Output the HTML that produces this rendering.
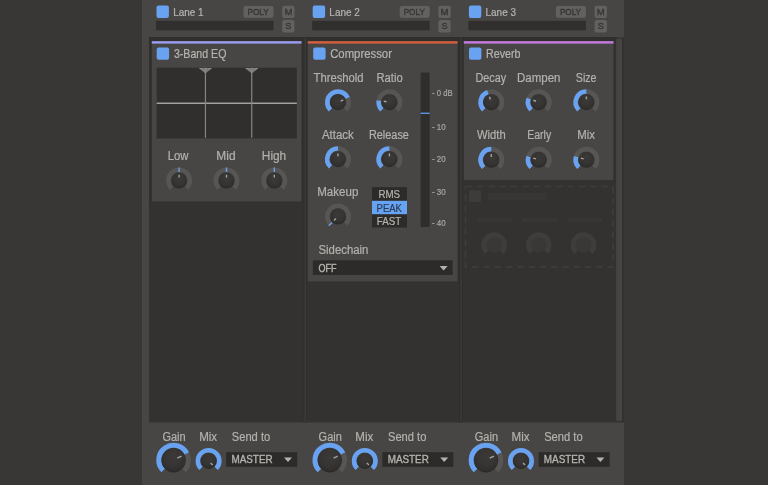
<!DOCTYPE html>
<html><head><meta charset="utf-8"><style>
html,body{margin:0;padding:0;background:#383735;width:768px;height:485px;overflow:hidden}
svg{display:block;filter:blur(0.6px)}
text{font-family:"Liberation Sans",sans-serif;stroke-width:0.22px;paint-order:stroke}
</style></head><body>
<svg width="768" height="485" viewBox="0 0 768 485">
<defs><linearGradient id="tg" x1="0" x2="1" y1="0" y2="0"><stop offset="0" stop-color="#959390"/><stop offset="0.4" stop-color="#7a7875"/><stop offset="0.5" stop-color="#8a8885"/><stop offset="0.6" stop-color="#7a7875"/><stop offset="1" stop-color="#959390"/></linearGradient><radialGradient id="kg" cx="50%" cy="38%" r="62%"><stop offset="0" stop-color="#3a3937"/><stop offset="0.55" stop-color="#363533"/><stop offset="0.85" stop-color="#302f2d"/><stop offset="1" stop-color="#292826"/></radialGradient></defs>
<rect x="0.00" y="0.00" width="768.00" height="485.00" rx="0" fill="#383735" />
<rect x="142.00" y="0.00" width="482.00" height="485.00" rx="0" fill="#474644" />
<rect x="149.00" y="37.50" width="475.00" height="385.00" rx="0" fill="#333230" />
<rect x="149.00" y="37.00" width="468.00" height="1.00" rx="0" fill="#302f2d" />
<rect x="616.20" y="38.70" width="5.80" height="382.30" rx="1" fill="#454442" />
<rect x="156.50" y="5.60" width="12.40" height="12.40" rx="2" fill="#69a2f0" />
<text x="173.15" y="15.80" font-size="11.13" fill="#b5b3af" stroke="#b5b3af" textLength="30.48" lengthAdjust="spacingAndGlyphs" >Lane 1</text>
<rect x="156.00" y="20.90" width="117.50" height="9.40" rx="0" fill="#302f2d" />
<rect x="243.50" y="6.00" width="30.00" height="11.80" rx="2" fill="#62615f" />
<text x="247.50" y="14.90" font-size="9.12" fill="#363533" stroke="#363533" textLength="21.15" lengthAdjust="spacingAndGlyphs" font-weight="normal" style="stroke-width:0.35px">POLY</text>
<rect x="282.20" y="5.80" width="12.30" height="12.10" rx="2" fill="#62615f" />
<rect x="282.20" y="20.10" width="12.30" height="12.30" rx="2" fill="#62615f" />
<text x="284.39" y="15.10" font-size="9.54" fill="#363533" stroke="#363533" textLength="7.96" lengthAdjust="spacingAndGlyphs" font-weight="normal" style="stroke-width:0.35px">M</text>
<text x="288.35" y="29.20" font-size="9.2" fill="#363533" stroke="#363533" text-anchor="middle" font-weight="normal" style="stroke-width:0.35px">S</text>
<text x="162.40" y="440.70" font-size="12.51" fill="#b3b1ad" stroke="#b3b1ad" textLength="23.19" lengthAdjust="spacingAndGlyphs" >Gain</text>
<text x="199.17" y="440.70" font-size="12.51" fill="#b3b1ad" stroke="#b3b1ad" textLength="17.99" lengthAdjust="spacingAndGlyphs" >Mix</text>
<text x="231.75" y="440.70" font-size="12.51" fill="#b3b1ad" stroke="#b3b1ad" textLength="38.47" lengthAdjust="spacingAndGlyphs" >Send to</text>
<path d="M163.28 470.42 A14.600000000000001 14.600000000000001 0 1 1 183.92 470.42" fill="none" stroke="#575654" stroke-width="5.4"/>
<path d="M163.28 470.42 A14.600000000000001 14.600000000000001 0 1 1 186.66 453.57" fill="none" stroke="#69a2f0" stroke-width="5.4"/>
<circle cx="173.60" cy="460.10" r="12.30" fill="url(#kg)"/>
<line x1="177.34" y1="458.23" x2="181.52" y2="456.14" stroke="#a4a29e" stroke-width="1.4"/>
<path d="M201.03 468.47 A10.7 10.7 0 1 1 216.17 468.47" fill="none" stroke="#575654" stroke-width="4.6"/>
<path d="M201.03 468.47 A10.7 10.7 0 1 1 216.17 468.47" fill="none" stroke="#69a2f0" stroke-width="4.6"/>
<circle cx="208.60" cy="460.90" r="8.00" fill="url(#kg)"/>
<line x1="210.64" y1="462.94" x2="212.67" y2="464.97" stroke="#a4a29e" stroke-width="1.4"/>
<rect x="226.20" y="452.20" width="71.00" height="14.60" rx="0" fill="#2c2b29" />
<text x="231.46" y="463.40" font-size="10.6" fill="#b5b3af" stroke="#b5b3af" textLength="41.16" lengthAdjust="spacingAndGlyphs" style="stroke-width:0.35px">MASTER</text>
<path d="M284.00 457.4 L292.00 457.4 L288.00 462 Z" fill="#b5b3af"/>
<rect x="312.70" y="5.60" width="12.40" height="12.40" rx="2" fill="#69a2f0" />
<text x="329.35" y="15.80" font-size="11.13" fill="#b5b3af" stroke="#b5b3af" textLength="30.48" lengthAdjust="spacingAndGlyphs" >Lane 2</text>
<rect x="312.20" y="20.90" width="117.50" height="9.40" rx="0" fill="#302f2d" />
<rect x="399.70" y="6.00" width="30.00" height="11.80" rx="2" fill="#62615f" />
<text x="403.70" y="14.90" font-size="9.12" fill="#363533" stroke="#363533" textLength="21.15" lengthAdjust="spacingAndGlyphs" font-weight="normal" style="stroke-width:0.35px">POLY</text>
<rect x="438.40" y="5.80" width="12.30" height="12.10" rx="2" fill="#62615f" />
<rect x="438.40" y="20.10" width="12.30" height="12.30" rx="2" fill="#62615f" />
<text x="440.59" y="15.10" font-size="9.54" fill="#363533" stroke="#363533" textLength="7.96" lengthAdjust="spacingAndGlyphs" font-weight="normal" style="stroke-width:0.35px">M</text>
<text x="444.55" y="29.20" font-size="9.2" fill="#363533" stroke="#363533" text-anchor="middle" font-weight="normal" style="stroke-width:0.35px">S</text>
<text x="318.60" y="440.70" font-size="12.51" fill="#b3b1ad" stroke="#b3b1ad" textLength="23.19" lengthAdjust="spacingAndGlyphs" >Gain</text>
<text x="355.37" y="440.70" font-size="12.51" fill="#b3b1ad" stroke="#b3b1ad" textLength="17.99" lengthAdjust="spacingAndGlyphs" >Mix</text>
<text x="387.95" y="440.70" font-size="12.51" fill="#b3b1ad" stroke="#b3b1ad" textLength="38.47" lengthAdjust="spacingAndGlyphs" >Send to</text>
<path d="M319.48 470.42 A14.600000000000001 14.600000000000001 0 1 1 340.12 470.42" fill="none" stroke="#575654" stroke-width="5.4"/>
<path d="M319.48 470.42 A14.600000000000001 14.600000000000001 0 1 1 342.86 453.57" fill="none" stroke="#69a2f0" stroke-width="5.4"/>
<circle cx="329.80" cy="460.10" r="12.30" fill="url(#kg)"/>
<line x1="333.54" y1="458.23" x2="337.72" y2="456.14" stroke="#a4a29e" stroke-width="1.4"/>
<path d="M357.23 468.47 A10.7 10.7 0 1 1 372.37 468.47" fill="none" stroke="#575654" stroke-width="4.6"/>
<path d="M357.23 468.47 A10.7 10.7 0 1 1 372.37 468.47" fill="none" stroke="#69a2f0" stroke-width="4.6"/>
<circle cx="364.80" cy="460.90" r="8.00" fill="url(#kg)"/>
<line x1="366.84" y1="462.94" x2="368.87" y2="464.97" stroke="#a4a29e" stroke-width="1.4"/>
<rect x="382.40" y="452.20" width="71.00" height="14.60" rx="0" fill="#2c2b29" />
<text x="387.66" y="463.40" font-size="10.6" fill="#b5b3af" stroke="#b5b3af" textLength="41.16" lengthAdjust="spacingAndGlyphs" style="stroke-width:0.35px">MASTER</text>
<path d="M440.20 457.4 L448.20 457.4 L444.20 462 Z" fill="#b5b3af"/>
<rect x="468.90" y="5.60" width="12.40" height="12.40" rx="2" fill="#69a2f0" />
<text x="485.55" y="15.80" font-size="11.13" fill="#b5b3af" stroke="#b5b3af" textLength="30.43" lengthAdjust="spacingAndGlyphs" >Lane 3</text>
<rect x="468.40" y="20.90" width="117.50" height="9.40" rx="0" fill="#302f2d" />
<rect x="555.90" y="6.00" width="30.00" height="11.80" rx="2" fill="#62615f" />
<text x="559.90" y="14.90" font-size="9.12" fill="#363533" stroke="#363533" textLength="21.15" lengthAdjust="spacingAndGlyphs" font-weight="normal" style="stroke-width:0.35px">POLY</text>
<rect x="594.60" y="5.80" width="12.30" height="12.10" rx="2" fill="#62615f" />
<rect x="594.60" y="20.10" width="12.30" height="12.30" rx="2" fill="#62615f" />
<text x="596.79" y="15.10" font-size="9.54" fill="#363533" stroke="#363533" textLength="7.96" lengthAdjust="spacingAndGlyphs" font-weight="normal" style="stroke-width:0.35px">M</text>
<text x="600.75" y="29.20" font-size="9.2" fill="#363533" stroke="#363533" text-anchor="middle" font-weight="normal" style="stroke-width:0.35px">S</text>
<text x="474.80" y="440.70" font-size="12.51" fill="#b3b1ad" stroke="#b3b1ad" textLength="23.19" lengthAdjust="spacingAndGlyphs" >Gain</text>
<text x="511.57" y="440.70" font-size="12.51" fill="#b3b1ad" stroke="#b3b1ad" textLength="17.99" lengthAdjust="spacingAndGlyphs" >Mix</text>
<text x="544.15" y="440.70" font-size="12.51" fill="#b3b1ad" stroke="#b3b1ad" textLength="38.47" lengthAdjust="spacingAndGlyphs" >Send to</text>
<path d="M475.68 470.42 A14.600000000000001 14.600000000000001 0 1 1 496.32 470.42" fill="none" stroke="#575654" stroke-width="5.4"/>
<path d="M475.68 470.42 A14.600000000000001 14.600000000000001 0 1 1 499.06 453.57" fill="none" stroke="#69a2f0" stroke-width="5.4"/>
<circle cx="486.00" cy="460.10" r="12.30" fill="url(#kg)"/>
<line x1="489.74" y1="458.23" x2="493.92" y2="456.14" stroke="#a4a29e" stroke-width="1.4"/>
<path d="M513.43 468.47 A10.7 10.7 0 1 1 528.57 468.47" fill="none" stroke="#575654" stroke-width="4.6"/>
<path d="M513.43 468.47 A10.7 10.7 0 1 1 528.57 468.47" fill="none" stroke="#69a2f0" stroke-width="4.6"/>
<circle cx="521.00" cy="460.90" r="8.00" fill="url(#kg)"/>
<line x1="523.04" y1="462.94" x2="525.07" y2="464.97" stroke="#a4a29e" stroke-width="1.4"/>
<rect x="538.60" y="452.20" width="71.00" height="14.60" rx="0" fill="#2c2b29" />
<text x="543.86" y="463.40" font-size="10.6" fill="#b5b3af" stroke="#b5b3af" textLength="41.16" lengthAdjust="spacingAndGlyphs" style="stroke-width:0.35px">MASTER</text>
<path d="M596.40 457.4 L604.40 457.4 L600.40 462 Z" fill="#b5b3af"/>
<rect x="149.00" y="37.50" width="154.00" height="164.80" rx="0" fill="#302f2d" />
<rect x="151.80" y="41.00" width="149.70" height="160.50" rx="0" fill="#474644" />
<rect x="151.80" y="41.20" width="149.70" height="2.40" rx="0" fill="#9b9cf2" />
<rect x="156.70" y="47.40" width="12.40" height="12.40" rx="2" fill="#69a2f0" />
<text x="173.93" y="57.80" font-size="11.98" fill="#b5b3af" stroke="#b5b3af" textLength="52.48" lengthAdjust="spacingAndGlyphs" >3-Band EQ</text>
<rect x="156.70" y="67.70" width="140.10" height="70.80" rx="0" fill="#302f2d" />
<rect x="156.70" y="102.55" width="140.10" height="1.40" rx="0" fill="#aaa8a4" />
<rect x="204.85" y="67.70" width="1.20" height="70.10" rx="0" fill="#878582" />
<path d="M198.75 68.1 L212.15 68.1 L205.45 73.6 Z" fill="url(#tg)"/>
<rect x="251.15" y="67.70" width="1.20" height="70.10" rx="0" fill="#878582" />
<path d="M245.05 68.1 L258.45 68.1 L251.75 73.6 Z" fill="url(#tg)"/>
<text x="167.64" y="160.00" font-size="12.51" fill="#b3b1ad" stroke="#b3b1ad" textLength="20.80" lengthAdjust="spacingAndGlyphs" >Low</text>
<path d="M171.53 188.07 A10.7 10.7 0 1 1 186.67 188.07" fill="none" stroke="#575654" stroke-width="4.6"/>
<line x1="179.10" y1="172.10" x2="179.10" y2="167.50" stroke="#69a2f0" stroke-width="1.35"/>
<circle cx="179.10" cy="180.50" r="8.00" fill="url(#kg)"/>
<line x1="179.10" y1="177.62" x2="179.10" y2="174.74" stroke="#a4a29e" stroke-width="1.4"/>
<text x="216.29" y="160.00" font-size="12.51" fill="#b3b1ad" stroke="#b3b1ad" textLength="19.25" lengthAdjust="spacingAndGlyphs" >Mid</text>
<path d="M218.93 188.07 A10.7 10.7 0 1 1 234.07 188.07" fill="none" stroke="#575654" stroke-width="4.6"/>
<line x1="226.50" y1="172.10" x2="226.50" y2="167.50" stroke="#69a2f0" stroke-width="1.35"/>
<circle cx="226.50" cy="180.50" r="8.00" fill="url(#kg)"/>
<line x1="226.50" y1="177.62" x2="226.50" y2="174.74" stroke="#a4a29e" stroke-width="1.4"/>
<text x="261.80" y="160.00" font-size="12.51" fill="#b3b1ad" stroke="#b3b1ad" textLength="24.44" lengthAdjust="spacingAndGlyphs" >High</text>
<path d="M266.73 188.07 A10.7 10.7 0 1 1 281.87 188.07" fill="none" stroke="#575654" stroke-width="4.6"/>
<line x1="274.30" y1="172.10" x2="274.30" y2="167.50" stroke="#69a2f0" stroke-width="1.35"/>
<circle cx="274.30" cy="180.50" r="8.00" fill="url(#kg)"/>
<line x1="274.30" y1="177.62" x2="274.30" y2="174.74" stroke="#a4a29e" stroke-width="1.4"/>
<rect x="305.00" y="37.50" width="154.00" height="244.90" rx="0" fill="#302f2d" />
<rect x="307.80" y="41.00" width="149.70" height="240.60" rx="0" fill="#474644" />
<rect x="307.80" y="41.20" width="149.70" height="2.40" rx="0" fill="#d45f3c" />
<rect x="313.20" y="47.40" width="12.40" height="12.40" rx="2" fill="#69a2f0" />
<text x="330.18" y="57.80" font-size="11.98" fill="#b5b3af" stroke="#b5b3af" textLength="61.75" lengthAdjust="spacingAndGlyphs" >Compressor</text>
<text x="313.57" y="81.50" font-size="12.51" fill="#b3b1ad" stroke="#b3b1ad" textLength="50.03" lengthAdjust="spacingAndGlyphs" >Threshold</text>
<path d="M330.43 109.77 A10.7 10.7 0 1 1 345.57 109.77" fill="none" stroke="#575654" stroke-width="4.6"/>
<path d="M330.43 109.77 A10.7 10.7 0 1 1 347.79 97.87" fill="none" stroke="#69a2f0" stroke-width="4.6"/>
<circle cx="338.00" cy="102.20" r="8.00" fill="url(#kg)"/>
<line x1="340.63" y1="101.04" x2="343.27" y2="99.87" stroke="#a4a29e" stroke-width="1.4"/>
<text x="376.45" y="81.50" font-size="12.51" fill="#b3b1ad" stroke="#b3b1ad" textLength="26.24" lengthAdjust="spacingAndGlyphs" >Ratio</text>
<path d="M381.83 109.77 A10.7 10.7 0 1 1 396.97 109.77" fill="none" stroke="#575654" stroke-width="4.6"/>
<path d="M381.83 109.77 A10.7 10.7 0 0 1 378.83 100.53" fill="none" stroke="#69a2f0" stroke-width="4.6"/>
<circle cx="389.40" cy="102.20" r="8.00" fill="url(#kg)"/>
<line x1="386.56" y1="101.75" x2="383.71" y2="101.30" stroke="#a4a29e" stroke-width="1.4"/>
<text x="321.89" y="138.70" font-size="12.51" fill="#b3b1ad" stroke="#b3b1ad" textLength="31.84" lengthAdjust="spacingAndGlyphs" >Attack</text>
<path d="M330.43 166.77 A10.7 10.7 0 1 1 345.57 166.77" fill="none" stroke="#575654" stroke-width="4.6"/>
<path d="M330.43 166.77 A10.7 10.7 0 0 1 338.00 148.50" fill="none" stroke="#69a2f0" stroke-width="4.6"/>
<circle cx="338.00" cy="159.20" r="8.00" fill="url(#kg)"/>
<line x1="338.00" y1="156.32" x2="338.00" y2="153.44" stroke="#a4a29e" stroke-width="1.4"/>
<text x="368.98" y="138.70" font-size="12.51" fill="#b3b1ad" stroke="#b3b1ad" textLength="39.90" lengthAdjust="spacingAndGlyphs" >Release</text>
<path d="M381.83 166.77 A10.7 10.7 0 1 1 396.97 166.77" fill="none" stroke="#575654" stroke-width="4.6"/>
<path d="M381.83 166.77 A10.7 10.7 0 0 1 389.40 148.50" fill="none" stroke="#69a2f0" stroke-width="4.6"/>
<circle cx="389.40" cy="159.20" r="8.00" fill="url(#kg)"/>
<line x1="389.40" y1="156.32" x2="389.40" y2="153.44" stroke="#a4a29e" stroke-width="1.4"/>
<text x="317.23" y="196.00" font-size="12.51" fill="#b3b1ad" stroke="#b3b1ad" textLength="41.12" lengthAdjust="spacingAndGlyphs" >Makeup</text>
<path d="M330.43 224.07 A10.7 10.7 0 1 1 345.57 224.07" fill="none" stroke="#575654" stroke-width="4.6"/>
<line x1="332.06" y1="222.44" x2="328.81" y2="225.69" stroke="#69a2f0" stroke-width="1.35"/>
<circle cx="338.00" cy="216.50" r="8.00" fill="url(#kg)"/>
<line x1="335.96" y1="218.54" x2="333.93" y2="220.57" stroke="#a4a29e" stroke-width="1.4"/>
<rect x="372.00" y="187.20" width="35.00" height="40.30" rx="0" fill="#2c2b29" />
<rect x="372.00" y="200.80" width="35.00" height="13.40" rx="0" fill="#66a3f3" />
<text x="378.47" y="198.10" font-size="11.02" fill="#b5b3af" stroke="#b5b3af" textLength="21.64" lengthAdjust="spacingAndGlyphs" >RMS</text>
<text x="376.59" y="211.50" font-size="11.02" fill="#2c3a50" stroke="#2c3a50" textLength="25.28" lengthAdjust="spacingAndGlyphs" >PEAK</text>
<text x="376.87" y="225.00" font-size="11.02" fill="#b5b3af" stroke="#b5b3af" textLength="24.49" lengthAdjust="spacingAndGlyphs" >FAST</text>
<rect x="420.70" y="72.50" width="8.90" height="154.50" rx="0" fill="#2f2e2c" />
<rect x="420.70" y="112.60" width="8.90" height="1.40" rx="0" fill="#5b96e6" />
<text x="432.00" y="96.20" font-size="9.96" fill="#a9a7a3" stroke="#a9a7a3" textLength="20.56" lengthAdjust="spacingAndGlyphs" >- 0 dB</text>
<text x="431.99" y="129.50" font-size="9.96" fill="#a9a7a3" stroke="#a9a7a3" textLength="13.70" lengthAdjust="spacingAndGlyphs" >- 10</text>
<text x="431.99" y="162.40" font-size="9.96" fill="#a9a7a3" stroke="#a9a7a3" textLength="13.70" lengthAdjust="spacingAndGlyphs" >- 20</text>
<text x="431.99" y="194.80" font-size="9.96" fill="#a9a7a3" stroke="#a9a7a3" textLength="13.70" lengthAdjust="spacingAndGlyphs" >- 30</text>
<text x="431.99" y="226.00" font-size="9.96" fill="#a9a7a3" stroke="#a9a7a3" textLength="13.70" lengthAdjust="spacingAndGlyphs" >- 40</text>
<text x="318.44" y="254.20" font-size="12.51" fill="#b3b1ad" stroke="#b3b1ad" textLength="49.98" lengthAdjust="spacingAndGlyphs" >Sidechain</text>
<rect x="312.90" y="260.30" width="139.70" height="14.60" rx="0" fill="#2c2b29" />
<text x="318.54" y="271.60" font-size="10.39" fill="#b5b3af" stroke="#b5b3af" textLength="18.06" lengthAdjust="spacingAndGlyphs" style="stroke-width:0.4px">OFF</text>
<path d="M439.6 266 L447.6 266 L443.6 270.5 Z" fill="#b5b3af"/>
<rect x="461.00" y="37.50" width="154.00" height="143.50" rx="0" fill="#302f2d" />
<rect x="463.80" y="41.00" width="149.70" height="139.20" rx="0" fill="#474644" />
<rect x="463.80" y="41.20" width="149.70" height="2.40" rx="0" fill="#c77ae0" />
<rect x="469.00" y="47.40" width="12.40" height="12.40" rx="2" fill="#69a2f0" />
<text x="486.09" y="57.80" font-size="11.98" fill="#b5b3af" stroke="#b5b3af" textLength="34.47" lengthAdjust="spacingAndGlyphs" >Reverb</text>
<text x="475.59" y="81.50" font-size="12.51" fill="#b3b1ad" stroke="#b3b1ad" textLength="30.51" lengthAdjust="spacingAndGlyphs" >Decay</text>
<path d="M483.73 109.77 A10.7 10.7 0 1 1 498.87 109.77" fill="none" stroke="#575654" stroke-width="4.6"/>
<path d="M483.73 109.77 A10.7 10.7 0 0 1 487.83 92.08" fill="none" stroke="#69a2f0" stroke-width="4.6"/>
<circle cx="491.30" cy="102.20" r="8.00" fill="url(#kg)"/>
<line x1="490.37" y1="99.48" x2="489.43" y2="96.75" stroke="#a4a29e" stroke-width="1.4"/>
<text x="517.03" y="81.50" font-size="12.51" fill="#b3b1ad" stroke="#b3b1ad" textLength="43.47" lengthAdjust="spacingAndGlyphs" >Dampen</text>
<path d="M531.13 109.77 A10.7 10.7 0 1 1 546.27 109.77" fill="none" stroke="#575654" stroke-width="4.6"/>
<path d="M531.13 109.77 A10.7 10.7 0 0 1 528.63 98.58" fill="none" stroke="#69a2f0" stroke-width="4.6"/>
<circle cx="538.70" cy="102.20" r="8.00" fill="url(#kg)"/>
<line x1="535.99" y1="101.22" x2="533.28" y2="100.25" stroke="#a4a29e" stroke-width="1.4"/>
<text x="575.77" y="81.50" font-size="12.51" fill="#b3b1ad" stroke="#b3b1ad" textLength="20.76" lengthAdjust="spacingAndGlyphs" >Size</text>
<path d="M578.83 109.77 A10.7 10.7 0 1 1 593.97 109.77" fill="none" stroke="#575654" stroke-width="4.6"/>
<path d="M578.83 109.77 A10.7 10.7 0 0 1 586.40 91.50" fill="none" stroke="#69a2f0" stroke-width="4.6"/>
<circle cx="586.40" cy="102.20" r="8.00" fill="url(#kg)"/>
<line x1="586.40" y1="99.32" x2="586.40" y2="96.44" stroke="#a4a29e" stroke-width="1.4"/>
<text x="476.99" y="138.80" font-size="12.51" fill="#b3b1ad" stroke="#b3b1ad" textLength="28.70" lengthAdjust="spacingAndGlyphs" >Width</text>
<path d="M483.73 167.37 A10.7 10.7 0 1 1 498.87 167.37" fill="none" stroke="#575654" stroke-width="4.6"/>
<path d="M483.73 167.37 A10.7 10.7 0 0 1 491.30 149.10" fill="none" stroke="#69a2f0" stroke-width="4.6"/>
<circle cx="491.30" cy="159.80" r="8.00" fill="url(#kg)"/>
<line x1="491.30" y1="156.92" x2="491.30" y2="154.04" stroke="#a4a29e" stroke-width="1.4"/>
<text x="527.31" y="138.80" font-size="12.51" fill="#b3b1ad" stroke="#b3b1ad" textLength="23.87" lengthAdjust="spacingAndGlyphs" >Early</text>
<path d="M531.13 167.37 A10.7 10.7 0 1 1 546.27 167.37" fill="none" stroke="#575654" stroke-width="4.6"/>
<path d="M531.13 167.37 A10.7 10.7 0 0 1 528.47 156.65" fill="none" stroke="#69a2f0" stroke-width="4.6"/>
<circle cx="538.70" cy="159.80" r="8.00" fill="url(#kg)"/>
<line x1="535.95" y1="158.95" x2="533.19" y2="158.11" stroke="#a4a29e" stroke-width="1.4"/>
<text x="577.24" y="138.80" font-size="12.51" fill="#b3b1ad" stroke="#b3b1ad" textLength="17.73" lengthAdjust="spacingAndGlyphs" >Mix</text>
<path d="M578.83 167.37 A10.7 10.7 0 1 1 593.97 167.37" fill="none" stroke="#575654" stroke-width="4.6"/>
<path d="M578.83 167.37 A10.7 10.7 0 0 1 576.17 156.65" fill="none" stroke="#69a2f0" stroke-width="4.6"/>
<circle cx="586.40" cy="159.80" r="8.00" fill="url(#kg)"/>
<line x1="583.65" y1="158.95" x2="580.89" y2="158.11" stroke="#a4a29e" stroke-width="1.4"/>
<rect x="303.60" y="37.50" width="3.40" height="385.00" rx="0" fill="#2f2e2c" />
<rect x="304.50" y="37.50" width="1.60" height="385.00" rx="0" fill="#3b3a38" />
<rect x="459.40" y="37.50" width="3.40" height="385.00" rx="0" fill="#2f2e2c" />
<rect x="460.30" y="37.50" width="1.60" height="385.00" rx="0" fill="#3b3a38" />
<rect x="465.5" y="186.5" width="147.3" height="80.3" fill="none" stroke="#3e3d3b" stroke-width="1.7" stroke-dasharray="6.5 4.8" stroke-dashoffset="-0.3"/>
<rect x="469.10" y="190.20" width="11.90" height="11.70" rx="1.5" fill="#3d3c3a" />
<rect x="488.00" y="192.80" width="59.30" height="7.50" rx="0" fill="#373634" />
<rect x="476.90" y="217.80" width="35.40" height="4.20" rx="0" fill="#373634" />
<rect x="521.80" y="217.80" width="35.40" height="4.20" rx="0" fill="#373634" />
<rect x="566.90" y="217.80" width="35.40" height="4.20" rx="0" fill="#373634" />
<path d="M487.06 252.24 A10.1 10.1 0 1 1 501.34 252.24" fill="none" stroke="#3e3d3b" stroke-width="5.3"/>
<circle cx="494.2" cy="245.1" r="7.6" fill="#393836"/>
<path d="M531.66 252.24 A10.1 10.1 0 1 1 545.94 252.24" fill="none" stroke="#3e3d3b" stroke-width="5.3"/>
<circle cx="538.8" cy="245.1" r="7.6" fill="#393836"/>
<path d="M576.36 252.24 A10.1 10.1 0 1 1 590.64 252.24" fill="none" stroke="#3e3d3b" stroke-width="5.3"/>
<circle cx="583.5" cy="245.1" r="7.6" fill="#393836"/>
</svg>
</body></html>
